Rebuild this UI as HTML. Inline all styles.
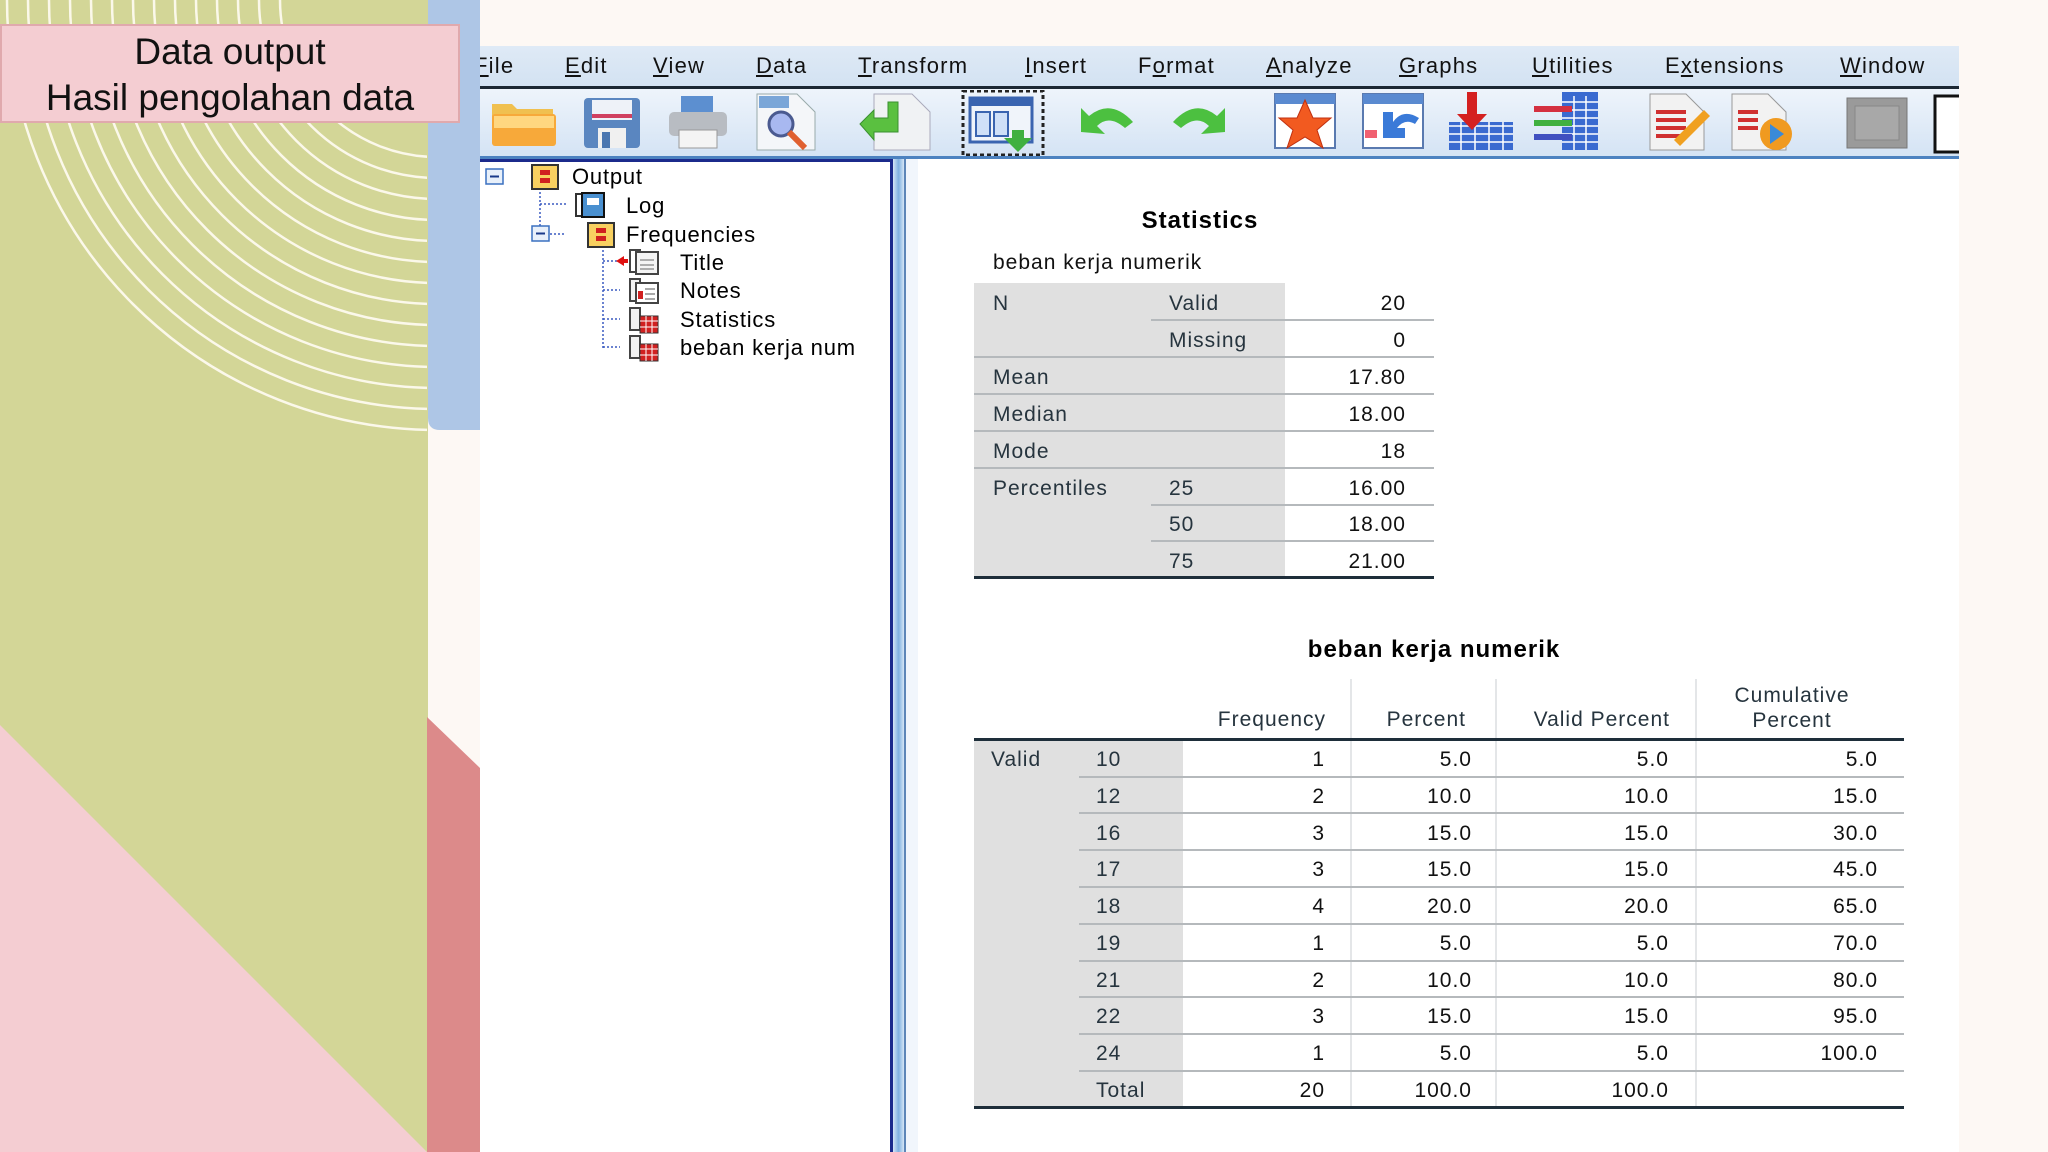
<!DOCTYPE html>
<html><head><meta charset="utf-8"><style>
*{margin:0;padding:0;box-sizing:border-box}
body{width:2048px;height:1152px;overflow:hidden;background:#fdf8f4;position:relative;font-family:"Liberation Sans",sans-serif}
.a{position:absolute}
.menu span{position:absolute;top:7px;font-size:22px;color:#111;letter-spacing:1.2px;white-space:nowrap}
.menu u{text-decoration:underline}
.tree span{position:absolute;font-size:22px;color:#000;letter-spacing:0.8px;white-space:nowrap}
.t{position:absolute;font-size:21px;letter-spacing:1px;white-space:nowrap;color:#26343e}
.v{position:absolute;font-size:21px;letter-spacing:1px;white-space:nowrap;color:#111;text-align:right}
.h{position:absolute;height:2px;background:#b5b9bc}
.full{position:absolute;left:0;top:0;width:2048px;height:1152px}
</style></head><body>
<!-- left decoration -->
<svg class="a" style="left:0;top:0" width="480" height="1152">
<rect x="0" y="0" width="428" height="1152" fill="#d3d697"/>
<polygon points="0,725 427,1152 0,1152" fill="#f4cdd2"/>
<polygon points="427,717 480,768 480,1152 427,1152" fill="#dc8a8a"/>
<path d="M428,0 H856 V46 H480 V430 H440 Q428,430 428,418 Z" fill="#aec6e6"/>
<clipPath id="c"><rect x="0" y="0" width="427" height="440"/></clipPath>
<g fill="none" stroke="#fbf8ea" stroke-width="2.5" clip-path="url(#c)">
<circle cx="437" cy="0" r="430"/><circle cx="437" cy="0" r="409"/><circle cx="437" cy="0" r="388"/><circle cx="437" cy="0" r="367"/><circle cx="437" cy="0" r="346"/><circle cx="437" cy="0" r="325"/><circle cx="437" cy="0" r="304"/><circle cx="437" cy="0" r="283"/><circle cx="437" cy="0" r="262"/><circle cx="437" cy="0" r="241"/><circle cx="437" cy="0" r="220"/><circle cx="437" cy="0" r="199"/><circle cx="437" cy="0" r="178"/><circle cx="437" cy="0" r="157"/>
</g>
</svg>
<div class="a" style="left:0;top:24px;width:460px;height:99px;background:#f4cdd2;border:2px solid #e0a9ad;text-align:center;font-size:37px;line-height:46px;color:#111;padding-top:3px">Data output<br>Hasil pengolahan data</div>

<!-- window -->
<div class="a" style="left:480px;top:46px;width:1479px;height:1106px;background:#fff;overflow:hidden">
 <div class="a" style="left:0;top:0;width:1479px;height:40px;background:linear-gradient(#dfeaf6,#d3e2f2)"></div>
 <div class="menu">
 <span style="left:-6px"><u>F</u>ile</span><span style="left:85px"><u>E</u>dit</span><span style="left:173px"><u>V</u>iew</span><span style="left:276px"><u>D</u>ata</span><span style="left:378px"><u>T</u>ransform</span><span style="left:545px"><u>I</u>nsert</span><span style="left:658px">F<u>o</u>rmat</span><span style="left:786px"><u>A</u>nalyze</span><span style="left:919px"><u>G</u>raphs</span><span style="left:1052px"><u>U</u>tilities</span><span style="left:1185px">E<u>x</u>tensions</span><span style="left:1360px"><u>W</u>indow</span>
 </div>
 <div class="a" style="left:0;top:40px;width:1479px;height:3px;background:#1b2733"></div>
 <div class="a" style="left:0;top:43px;width:1479px;height:68px;background:linear-gradient(#eef4fb,#d4e3f4)"></div>
 <div class="a" style="left:0;top:110px;width:1479px;height:3px;background:#4c82c0"></div>
 <div class="a" style="left:0;top:113px;width:413px;height:1000px;border-top:3px solid #1b2a8c;border-right:3px solid #1b2a8c;background:#fff"></div>
 <div class="a" style="left:413px;top:113px;width:11px;height:1000px;background:linear-gradient(90deg,#d6e6f6,#7fb0e0,#d6e6f6)"></div>
 <div class="a" style="left:424px;top:113px;width:2px;height:1000px;background:#5d86b8"></div>
 <div class="a" style="left:426px;top:113px;width:12px;height:1000px;background:#f1f6fc"></div>
</div>

<!-- toolbar icons -->
<svg class="a" style="left:480px;top:90px" width="1479" height="66">
<g transform="translate(10,0)"><path d="M2,14 h20 l5,5 h36 v8 H2z" fill="#f0c050"/><rect x="2" y="24" width="64" height="32" rx="3" fill="#f7a93a"/><rect x="4" y="26" width="60" height="12" fill="#ffd780"/></g>
<g transform="translate(102,0)"><rect x="2" y="8" width="56" height="50" rx="4" fill="#5a86c0"/><rect x="10" y="10" width="40" height="20" fill="#eef2f8"/><rect x="10" y="24" width="40" height="4" fill="#d04060"/><rect x="16" y="38" width="28" height="20" fill="#f0f0f0"/><rect x="20" y="42" width="8" height="16" fill="#4a76b0"/></g>
<g transform="translate(187,0)"><rect x="14" y="6" width="32" height="18" fill="#5c8fd0"/><rect x="2" y="22" width="58" height="24" rx="5" fill="#b8bcc2"/><rect x="12" y="40" width="38" height="18" fill="#f4f4f4" stroke="#999"/></g>
<g transform="translate(275,0)"><path d="M2,4 h40 l18,18 v38 H2z" fill="#f4f6f9" stroke="#9aa"/><rect x="4" y="6" width="30" height="12" fill="#7aa6d8"/><circle cx="26" cy="34" r="12" fill="#a8b8f0" stroke="#4a5a90" stroke-width="3"/><path d="M34,42 l16,16" stroke="#e06030" stroke-width="6"/></g>
<g transform="translate(376,0)"><path d="M18,4 h38 l18,18 v38 H18z" fill="#f0f2f4" stroke="#aab"/><path d="M4,34 l14,-14 v8 h14 v-16 h10 v30 h-24 v8z" fill="#5ac040" stroke="#3a9030"/></g>
<g transform="translate(482,0)"><rect x="1" y="1" width="80" height="64" fill="none" stroke="#222" stroke-width="3" stroke-dasharray="4 3"/><rect x="8" y="8" width="62" height="44" fill="#f0f4fa" stroke="#3a64b0" stroke-width="3"/><rect x="8" y="8" width="62" height="8" fill="#3a64b0"/><rect x="14" y="22" width="14" height="24" fill="#cfe0f8" stroke="#3a64b0" stroke-width="2"/><rect x="32" y="22" width="14" height="24" fill="#cfe0f8" stroke="#3a64b0" stroke-width="2"/><path d="M50,40 h12 v8 h8 l-14,14 l-14,-14 h8z" fill="#40b040"/></g>
<g transform="translate(597,0)"><path d="M4,42 v-24 l8,8 q22,-18 44,6 l-8,6 q-16,-14 -28,-2 l8,8z" fill="#4cc040"/></g>
<g transform="translate(685,0)"><path d="M60,42 v-24 l-8,8 q-22,-18 -44,6 l8,6 q16,-14 28,-2 l-8,8z" fill="#4cc040"/></g>
<g transform="translate(793,0)"><rect x="2" y="4" width="60" height="54" fill="#fff" stroke="#5a7ab0" stroke-width="2"/><rect x="2" y="4" width="60" height="10" fill="#5a8ad0"/><path d="M32,10 l8,18 h18 l-14,12 l6,18 l-18,-11 l-18,11 l6,-18 l-14,-12 h18z" fill="#f25a20" stroke="#c03010"/></g>
<g transform="translate(881,0)"><rect x="2" y="4" width="60" height="54" fill="#fff" stroke="#5a7ab0" stroke-width="2"/><rect x="2" y="4" width="60" height="10" fill="#5a8ad0"/><path d="M22,22 h10 v10 q10,-14 26,-4 l-4,6 q-10,-6 -18,4 h8 v10 h-22z" fill="#3a7ad8"/><rect x="4" y="40" width="12" height="8" fill="#f06070"/></g>
<g transform="translate(967,0)"><rect x="2" y="32" width="64" height="28" fill="#3a6ad0"/><path d="M2,36 h64 M2,44 h64 M2,52 h64 M14,32 v28 M28,32 v28 M42,32 v28 M56,32 v28" stroke="#fff" stroke-width="1.5"/><path d="M20,2 h10 v22 h10 l-15,16 l-15,-16 h10z" fill="#d42020"/></g>
<g transform="translate(1052,0)"><rect x="30" y="2" width="36" height="58" fill="#3a6ad0"/><path d="M30,12 h36 M30,20 h36 M30,28 h36 M30,36 h36 M30,44 h36 M30,52 h36 M42,6 v54 M54,6 v54" stroke="#fff" stroke-width="1.5"/><rect x="2" y="16" width="38" height="6" fill="#d43040"/><rect x="2" y="30" width="38" height="6" fill="#40b040"/><rect x="2" y="44" width="38" height="6" fill="#4050c0"/></g>
<g transform="translate(1168,0)"><path d="M2,4 h36 l18,18 v38 H2z" fill="#f2f2f2" stroke="#999"/><path d="M8,22 h30 M8,30 h30 M8,38 h30 M8,46 h26" stroke="#d03030" stroke-width="4"/><path d="M26,50 l30,-30 l6,6 l-30,30z" fill="#f0a020"/></g>
<g transform="translate(1250,0)"><path d="M2,4 h36 l18,18 v38 H2z" fill="#f2f2f2" stroke="#999"/><path d="M8,22 h20 M8,30 h20 M8,38 h20" stroke="#d03030" stroke-width="4"/><circle cx="46" cy="44" r="16" fill="#f09a20"/><path d="M40,34 l14,10 l-14,10z" fill="#3a8ad8"/></g>
<g transform="translate(1365,0)"><rect x="2" y="8" width="60" height="50" fill="#9a9a9a" stroke="#777"/><rect x="10" y="16" width="44" height="34" fill="#a8a8a8" stroke="#888"/></g>
<g transform="translate(1453,0)"><rect x="2" y="6" width="30" height="56" fill="#fff" stroke="#111" stroke-width="3"/></g>
</svg>

<!-- tree -->
<svg class="a" style="left:480px;top:160px" width="410" height="210">
<g stroke="#3a5ac0" stroke-width="1.5" stroke-dasharray="2 2" fill="none">
<path d="M60,24 V74 M60,44 H86 M66,74 H86 M123,82 V188 M123,101 H140 M123,130 H140 M123,159 H140 M123,187 H140"/>
</g>
<rect x="6" y="9" width="17" height="15" fill="#e8f0fa" stroke="#3a70c0" stroke-width="1.5"/><path d="M10,16.5 h9" stroke="#1a3a8a" stroke-width="2"/>
<rect x="52" y="66" width="17" height="15" fill="#e8f0fa" stroke="#3a70c0" stroke-width="1.5"/><path d="M56,73.5 h9" stroke="#1a3a8a" stroke-width="2"/>
<g><rect x="52" y="5" width="26" height="24" fill="#f8d060" stroke="#333" stroke-width="2"/><rect x="60" y="10" width="10" height="5" fill="#d02020"/><rect x="60" y="18" width="10" height="5" fill="#d02020"/></g>
<g><rect x="108" y="63" width="26" height="24" fill="#f8d060" stroke="#333" stroke-width="2"/><rect x="116" y="68" width="10" height="5" fill="#d02020"/><rect x="116" y="76" width="10" height="5" fill="#d02020"/></g>
<g><rect x="96" y="34" width="10" height="22" fill="#fff" stroke="#333" stroke-width="2"/><rect x="102" y="33" width="22" height="24" fill="#4a90d0" stroke="#111" stroke-width="2"/><rect x="107" y="38" width="12" height="7" fill="#fff"/></g>
<path d="M136,101 l8,-5 v3 h4 v4 h-4 v3z" fill="#e01010"/>
<g transform="translate(150,88)"><rect x="0" y="2" width="10" height="22" fill="#fff" stroke="#444" stroke-width="2"/><rect x="6" y="4" width="22" height="22" fill="#f4f4f4" stroke="#444" stroke-width="2"/><path d="M10,12 h14 M10,17 h14 M10,21 h14" stroke="#666"/></g>
<g transform="translate(150,117)"><rect x="0" y="2" width="10" height="22" fill="#f2f2f2" stroke="#444" stroke-width="2"/><rect x="6" y="6" width="22" height="20" fill="#fff" stroke="#444" stroke-width="2"/><rect x="8" y="14" width="5" height="8" fill="#d02020"/><path d="M15,12 h10 M15,17 h10 M15,22 h10" stroke="#555"/></g>
<g transform="translate(150,146)"><rect x="0" y="2" width="10" height="22" fill="#f2f2f2" stroke="#444" stroke-width="2"/><rect x="10" y="10" width="18" height="17" fill="#d02020" stroke="#333"/><path d="M10,15 h18 M10,21 h18 M16,10 v17 M22,10 v17" stroke="#fff"/></g>
<g transform="translate(150,174)"><rect x="0" y="2" width="10" height="22" fill="#f2f2f2" stroke="#444" stroke-width="2"/><rect x="10" y="10" width="18" height="17" fill="#d02020" stroke="#333"/><path d="M10,15 h18 M10,21 h18 M16,10 v17 M22,10 v17" stroke="#fff"/></g>
</svg>
<div class="tree">
<span style="left:572px;top:164px">Output</span>
<span style="left:626px;top:193px">Log</span>
<span style="left:626px;top:222px">Frequencies</span>
<span style="left:680px;top:250px">Title</span>
<span style="left:680px;top:278px">Notes</span>
<span style="left:680px;top:307px">Statistics</span>
<span style="left:680px;top:335px">beban kerja num</span>
</div>

<!-- Statistics table -->
<div class="a" style="left:1000px;top:207px;width:400px;text-align:center;font-size:24px;font-weight:bold;letter-spacing:1px;color:#000">Statistics</div>
<div class="a" style="left:993px;top:251px;font-size:21px;letter-spacing:1px;color:#111">beban kerja numerik</div>
<div class="a" style="left:974px;top:283px;width:311px;height:294px;background:#e0e0e0"></div>
<div class="h" style="left:1151px;top:319px;width:283px"></div>
<div class="h" style="left:974px;top:356px;width:460px"></div>
<div class="h" style="left:974px;top:393px;width:460px"></div>
<div class="h" style="left:974px;top:430px;width:460px"></div>
<div class="h" style="left:974px;top:467px;width:460px"></div>
<div class="h" style="left:1151px;top:504px;width:283px"></div>
<div class="h" style="left:1151px;top:540px;width:283px"></div>
<div class="a" style="left:974px;top:576px;width:460px;height:3px;background:#1e2e3a"></div>
<div class="full">
<div class="t" style="left:993px;top:292px">N</div><div class="t" style="left:1169px;top:292px">Valid</div><div class="v" style="right:642px;top:292px">20</div>
<div class="t" style="left:1169px;top:329px">Missing</div><div class="v" style="right:642px;top:329px">0</div>
<div class="t" style="left:993px;top:366px">Mean</div><div class="v" style="right:642px;top:366px">17.80</div>
<div class="t" style="left:993px;top:403px">Median</div><div class="v" style="right:642px;top:403px">18.00</div>
<div class="t" style="left:993px;top:440px">Mode</div><div class="v" style="right:642px;top:440px">18</div>
<div class="t" style="left:993px;top:477px">Percentiles</div><div class="t" style="left:1169px;top:477px">25</div><div class="v" style="right:642px;top:477px">16.00</div>
<div class="t" style="left:1169px;top:513px">50</div><div class="v" style="right:642px;top:513px">18.00</div>
<div class="t" style="left:1169px;top:550px">75</div><div class="v" style="right:642px;top:550px">21.00</div>
</div>

<!-- Frequency table -->
<div class="a" style="left:1134px;top:636px;width:600px;text-align:center;font-size:24px;font-weight:bold;letter-spacing:1px;color:#000">beban kerja numerik</div>
<div class="a" style="left:974px;top:741px;width:209px;height:366px;background:#e0e0e0"></div>
<div class="a" style="left:1350px;top:679px;width:2px;height:428px;background:#e4e6e8"></div>
<div class="a" style="left:1495px;top:679px;width:2px;height:428px;background:#e4e6e8"></div>
<div class="a" style="left:1695px;top:679px;width:2px;height:428px;background:#e4e6e8"></div>
<div class="t" style="left:1200px;top:708px;width:126px;text-align:right">Frequency</div>
<div class="t" style="left:1360px;top:708px;width:106px;text-align:right">Percent</div>
<div class="t" style="left:1500px;top:708px;width:170px;text-align:right">Valid Percent</div>
<div class="t" style="left:1697px;top:683px;width:190px;text-align:center;line-height:25px">Cumulative<br>Percent</div>
<div class="a" style="left:974px;top:738px;width:930px;height:3px;background:#1e2e3a"></div>
<div class="h" style="left:1079px;top:776px;width:825px"></div>
<div class="h" style="left:1079px;top:812px;width:825px"></div>
<div class="h" style="left:1079px;top:849px;width:825px"></div>
<div class="h" style="left:1079px;top:886px;width:825px"></div>
<div class="h" style="left:1079px;top:923px;width:825px"></div>
<div class="h" style="left:1079px;top:960px;width:825px"></div>
<div class="h" style="left:1079px;top:996px;width:825px"></div>
<div class="h" style="left:1079px;top:1033px;width:825px"></div>
<div class="h" style="left:1079px;top:1070px;width:825px"></div>
<div class="a" style="left:974px;top:1106px;width:930px;height:3px;background:#1e2e3a"></div>
<div class="t" style="left:991px;top:748px">Valid</div>
<div class="full">
<div class="t" style="left:1096px;top:748px">10</div><div class="v" style="right:723px;top:748px">1</div><div class="v" style="right:576px;top:748px">5.0</div><div class="v" style="right:379px;top:748px">5.0</div><div class="v" style="right:170px;top:748px">5.0</div>
<div class="t" style="left:1096px;top:785px">12</div><div class="v" style="right:723px;top:785px">2</div><div class="v" style="right:576px;top:785px">10.0</div><div class="v" style="right:379px;top:785px">10.0</div><div class="v" style="right:170px;top:785px">15.0</div>
<div class="t" style="left:1096px;top:822px">16</div><div class="v" style="right:723px;top:822px">3</div><div class="v" style="right:576px;top:822px">15.0</div><div class="v" style="right:379px;top:822px">15.0</div><div class="v" style="right:170px;top:822px">30.0</div>
<div class="t" style="left:1096px;top:858px">17</div><div class="v" style="right:723px;top:858px">3</div><div class="v" style="right:576px;top:858px">15.0</div><div class="v" style="right:379px;top:858px">15.0</div><div class="v" style="right:170px;top:858px">45.0</div>
<div class="t" style="left:1096px;top:895px">18</div><div class="v" style="right:723px;top:895px">4</div><div class="v" style="right:576px;top:895px">20.0</div><div class="v" style="right:379px;top:895px">20.0</div><div class="v" style="right:170px;top:895px">65.0</div>
<div class="t" style="left:1096px;top:932px">19</div><div class="v" style="right:723px;top:932px">1</div><div class="v" style="right:576px;top:932px">5.0</div><div class="v" style="right:379px;top:932px">5.0</div><div class="v" style="right:170px;top:932px">70.0</div>
<div class="t" style="left:1096px;top:969px">21</div><div class="v" style="right:723px;top:969px">2</div><div class="v" style="right:576px;top:969px">10.0</div><div class="v" style="right:379px;top:969px">10.0</div><div class="v" style="right:170px;top:969px">80.0</div>
<div class="t" style="left:1096px;top:1005px">22</div><div class="v" style="right:723px;top:1005px">3</div><div class="v" style="right:576px;top:1005px">15.0</div><div class="v" style="right:379px;top:1005px">15.0</div><div class="v" style="right:170px;top:1005px">95.0</div>
<div class="t" style="left:1096px;top:1042px">24</div><div class="v" style="right:723px;top:1042px">1</div><div class="v" style="right:576px;top:1042px">5.0</div><div class="v" style="right:379px;top:1042px">5.0</div><div class="v" style="right:170px;top:1042px">100.0</div>
<div class="t" style="left:1096px;top:1079px">Total</div><div class="v" style="right:723px;top:1079px">20</div><div class="v" style="right:576px;top:1079px">100.0</div><div class="v" style="right:379px;top:1079px">100.0</div>
</div>
</body></html>
